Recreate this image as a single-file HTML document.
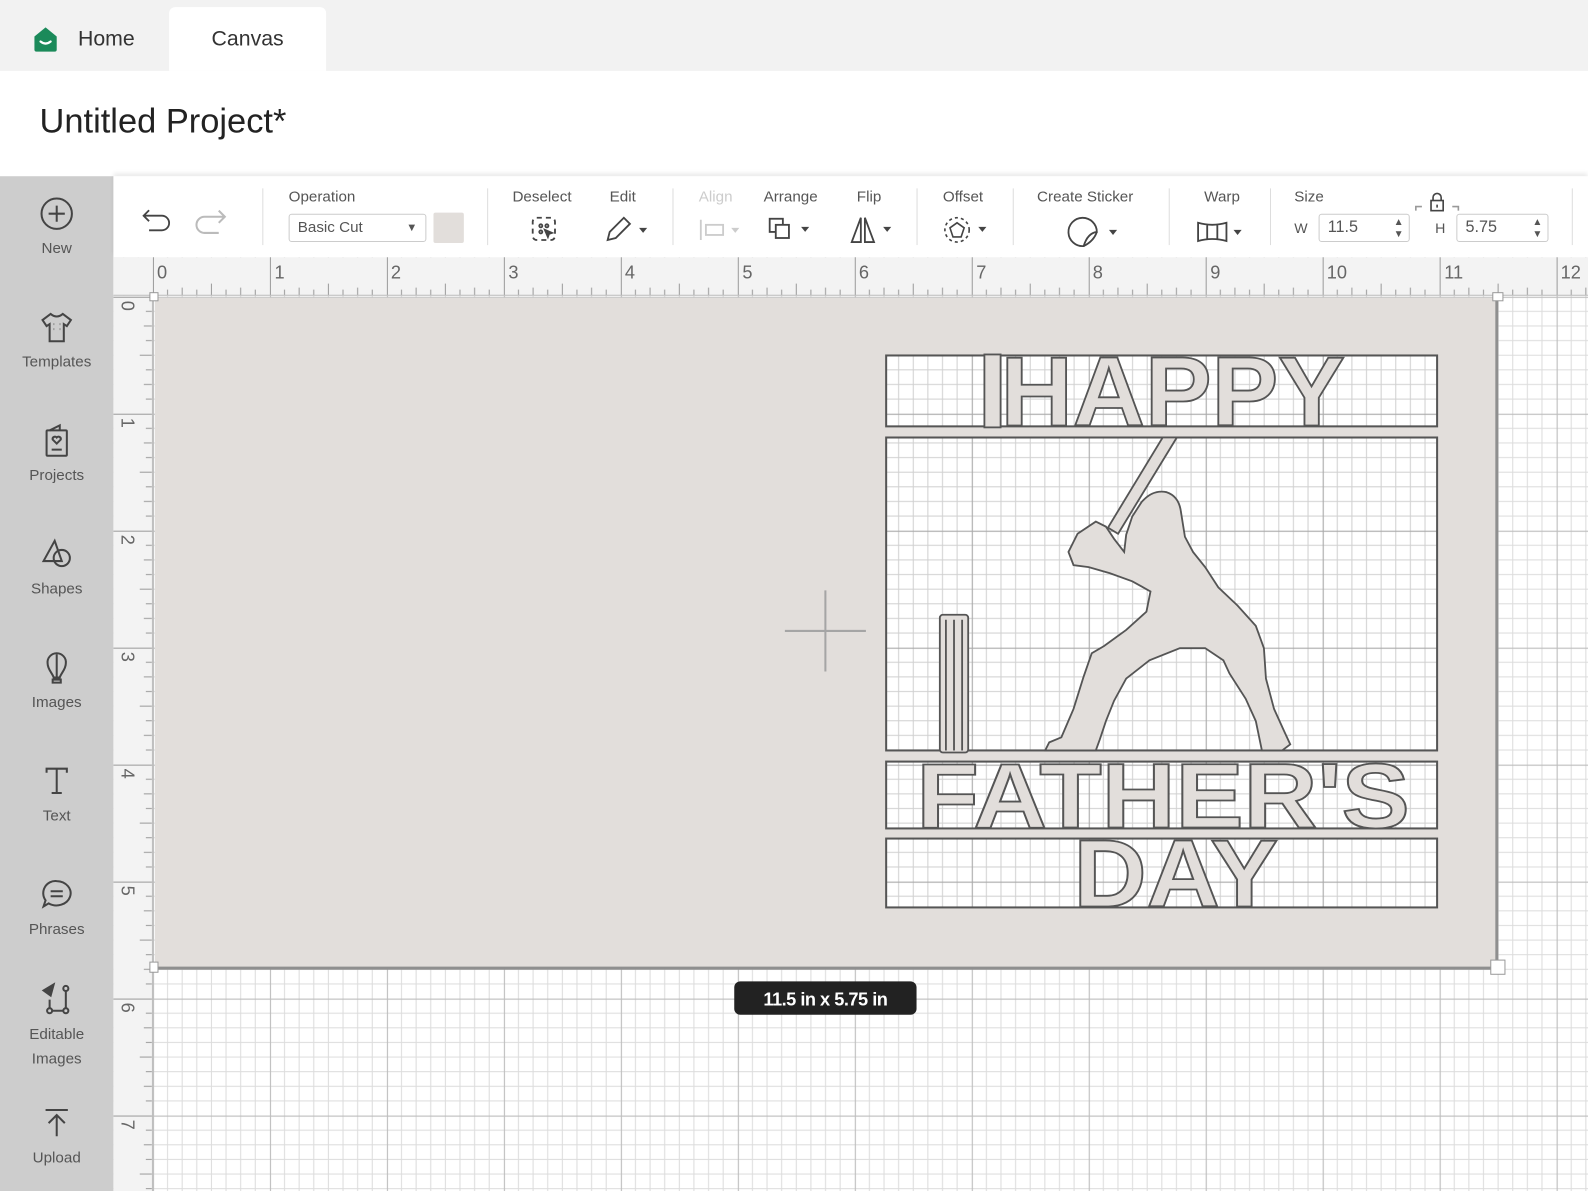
<!DOCTYPE html>
<html><head><meta charset="utf-8">
<style>
*{margin:0;padding:0;box-sizing:border-box}
html,body{width:1588px;height:1191px;overflow:hidden;background:#fff;font-family:"Liberation Sans",sans-serif}
#w{position:absolute;left:0;top:0;width:1568px;height:1176px;transform:scale(1.012755);transform-origin:0 0}
.abs{position:absolute}
.tabbar{left:0;top:0;width:1568px;height:70px;background:#f2f2f2}
.tab{top:7px;height:63px;display:flex;align-items:center;font-size:21px;color:#333}
.title{left:39px;top:101px;font-size:34px;color:#222}
.side{left:0;top:174px;width:112px;height:1002px;background:#cdcdcd}
.si{position:absolute;left:0;width:112px;text-align:center;font-size:15px;color:#555;line-height:24px}
.si svg{display:block;margin:0 auto 6px}
.tb{left:112px;top:174px;width:1456px;height:80px;background:#fff;box-shadow:0 -3px 4px rgba(0,0,0,.08)}
.lab{position:absolute;top:12px;font-size:15px;color:#555}
.div{position:absolute;top:12px;width:1px;height:56px;background:#ddd}
.inp{position:absolute;border:1px solid #ccc;border-radius:3px;font-size:16px;color:#555;padding-left:8px;line-height:26px;height:28px;background:#fff}
</style></head><body><div id="w">
<div class="abs tabbar"></div>
<div class="abs tab" style="left:0;width:167px;padding-left:32px">
<svg width="26" height="26" viewBox="0 0 26 26"><path d="M2 10 L13 1 L24 10 V23 a2 2 0 0 1 -2 2 H4 a2 2 0 0 1 -2 -2Z" fill="#1b8a5a"/><path d="M8 15 q5 4 10 0" stroke="#fff" stroke-width="2.2" fill="none" stroke-linecap="round"/></svg>
<span style="margin-left:19px">Home</span></div>
<div class="abs tab" style="left:167px;width:155px;background:#fff;border-radius:6px 6px 0 0;justify-content:center">Canvas</div>
<div class="abs title">Untitled Project*</div>

<div class="abs side">
<div class="si" style="top:20px"><svg width="34" height="34" viewBox="0 0 34 34" fill="none" stroke="#444" stroke-width="2"><circle cx="17" cy="17" r="15"/><path d="M17 9v16M9 17h16"/></svg>New</div>
<div class="si" style="top:132px"><svg width="34" height="34" viewBox="0 0 34 34" fill="none" stroke="#444" stroke-width="2"><path d="M11 4 L3 10 L7 16 L10 14 V31 H24 V14 L27 16 L31 10 L23 4 Q17 9 11 4Z"/><path d="M14 14h.5M20 14h.5M14 19h.5M20 19h.5"/></svg>Templates</div>
<div class="si" style="top:244px"><svg width="34" height="34" viewBox="0 0 34 34" fill="none" stroke="#444" stroke-width="2"><rect x="7" y="7" width="20" height="25" rx="1"/><path d="M10 7 L20 2 V7"/><path d="M17 20 l-4 -4 a2.3 2.3 0 0 1 4 -2 a2.3 2.3 0 0 1 4 2z"/><path d="M12 26h10"/></svg>Projects</div>
<div class="si" style="top:356px"><svg width="34" height="34" viewBox="0 0 34 34" fill="none" stroke="#444" stroke-width="2"><path d="M15 4 L4 24 H22Z"/><circle cx="22" cy="21" r="8"/></svg>Shapes</div>
<div class="si" style="top:468px"><svg width="34" height="34" viewBox="0 0 34 34" fill="none" stroke="#444" stroke-width="2"><path d="M17 3 a9 9 0 0 1 9 10 c0 6 -5 10 -6 14 h-6 c-1 -4 -6 -8 -6 -14 a9 9 0 0 1 9 -10z"/><path d="M17 4 v23 M13 29h8v3h-8z"/></svg>Images</div>
<div class="si" style="top:580px"><svg width="34" height="34" viewBox="0 0 34 34" fill="none" stroke="#444" stroke-width="2"><path d="M7 9 V5 H27 V9 M17 5 V29 M12 29 H22"/></svg>Text</div>
<div class="si" style="top:692px"><svg width="34" height="34" viewBox="0 0 34 34" fill="none" stroke="#444" stroke-width="2"><path d="M17 4 a14 12 0 1 1 -8 22 l-5 3 l2 -6 a12 12 0 0 1 11 -19z"/><path d="M11 14h12M11 19h12"/></svg>Phrases</div>
<div class="si" style="top:796px"><svg width="34" height="34" viewBox="0 0 34 34" fill="none" stroke="#444" stroke-width="2"><path d="M4 8 L14 2 L11 13 Z" fill="#444"/><path d="M10 17 V28 H26 V8"/><circle cx="10" cy="28" r="2.5" fill="#cdcdcd"/><circle cx="26" cy="28" r="2.5" fill="#cdcdcd"/><circle cx="26" cy="6" r="2.5" fill="#cdcdcd"/></svg>Editable<br>Images</div>
<div class="si" style="top:918px"><svg width="34" height="34" viewBox="0 0 34 34" fill="none" stroke="#444" stroke-width="2"><path d="M6 4H28M17 30V10M9 17l8-8 8 8"/></svg>Upload</div>
</div>

<div class="abs tb">
<svg class="abs" style="left:26px;top:30px" width="90" height="30" viewBox="0 0 90 30" fill="none" stroke-width="2"><path d="M8 4 L2 10 L8 16 M2 10 H22 a8 8 0 0 1 0 16 H8" stroke="#444" transform="translate(2,0) scale(.9)"/><path d="M82 4 L88 10 L82 16 M88 10 H68 a8 8 0 0 0 0 16 H82" stroke="#bbb" transform="translate(-4,0) scale(1)"/></svg>
<div class="div" style="left:147px"></div>
<div class="lab" style="left:173px">Operation</div>
<div class="inp" style="left:173px;top:37px;width:136px;font-size:15px">Basic Cut<span style="position:absolute;right:8px;font-size:11px">▼</span></div>
<div class="abs" style="left:316px;top:36px;width:30px;height:30px;background:#e2dedb;border-radius:2px"></div>
<div class="div" style="left:369px"></div>
<div class="lab" style="left:394px">Deselect</div>
<svg class="abs" style="left:411px;top:38px" width="28" height="28" viewBox="0 0 28 28" fill="none" stroke="#444" stroke-width="1.8"><rect x="3" y="3" width="22" height="22" rx="4" stroke-dasharray="5 4"/><circle cx="11" cy="11" r="1.5"/><circle cx="17" cy="11" r="1.5"/><circle cx="11" cy="17" r="1.5"/><path d="M15 15 l7 3 -3 1 -1 3z" fill="#444"/></svg>
<div class="lab" style="left:490px">Edit</div>
<svg class="abs" style="left:485px;top:38px" width="44" height="28" viewBox="0 0 44 28" fill="none" stroke="#444" stroke-width="1.8"><path d="M3 25 L5 17 L19 3 L25 9 L11 23 Z M3 25 L11 23"/><path d="M34 13h8l-4 5z" fill="#444" stroke="none"/></svg>
<div class="div" style="left:552px"></div>
<div class="lab" style="left:578px;color:#ccc">Align</div>
<svg class="abs" style="left:578px;top:42px" width="44" height="22" viewBox="0 0 44 22" fill="none" stroke="#ccc" stroke-width="1.8"><path d="M2 1v20"/><rect x="7" y="6" width="17" height="10"/><path d="M32 9h8l-4 5z" fill="#ccc" stroke="none"/></svg>
<div class="lab" style="left:642px">Arrange</div>
<svg class="abs" style="left:645px;top:39px" width="46" height="28" viewBox="0 0 46 28" fill="none" stroke="#444" stroke-width="1.8"><rect x="3" y="3" width="13" height="13"/><rect x="9" y="9" width="13" height="13" fill="#fff"/><path d="M34 11h8l-4 5z" fill="#444" stroke="none"/></svg>
<div class="lab" style="left:734px">Flip</div>
<svg class="abs" style="left:727px;top:38px" width="46" height="30" viewBox="0 0 46 30" fill="none" stroke="#444" stroke-width="1.8"><path d="M11 3 L2 27 H11Z M15 3 L24 27 H15Z"/><path d="M33 12h8l-4 5z" fill="#444" stroke="none"/></svg>
<div class="div" style="left:793px"></div>
<div class="lab" style="left:819px">Offset</div>
<svg class="abs" style="left:819px;top:38px" width="48" height="30" viewBox="0 0 48 30" fill="none" stroke="#444" stroke-width="1.6"><path d="M14 8 L21 13 L18 22 H10 L7 13Z"/><circle cx="14" cy="15" r="12" stroke-dasharray="3 3"/><path d="M35 12h8l-4 5z" fill="#444" stroke="none"/></svg>
<div class="div" style="left:888px"></div>
<div class="lab" style="left:912px">Create Sticker</div>
<svg class="abs" style="left:940px;top:38px" width="56" height="34" viewBox="0 0 56 34" fill="none" stroke="#444" stroke-width="1.8"><path d="M18 31 A14 14 0 1 1 31 17 Q22 18 18 31Z"/><path d="M31 17 Q28 26 18 31"/><path d="M43 15h8l-4 5z" fill="#444" stroke="none"/></svg>
<div class="div" style="left:1042px"></div>
<div class="lab" style="left:1077px">Warp</div>
<svg class="abs" style="left:1068px;top:42px" width="52" height="26" viewBox="0 0 52 26" fill="none" stroke="#444" stroke-width="1.8"><path d="M3 4 Q17 8 31 4 V22 Q17 18 3 22Z M12 6v14M22 6v14"/><path d="M38 11h8l-4 5z" fill="#444" stroke="none"/></svg>
<div class="div" style="left:1142px"></div>
<div class="lab" style="left:1166px">Size</div>
<svg class="abs" style="left:1284px;top:14px" width="46" height="24" viewBox="0 0 46 24" fill="none" stroke="#444" stroke-width="1.6"><path d="M2 20 v-4 h6 M44 20 v-4 h-6" stroke="#999"/><rect x="17" y="10" width="12" height="10"/><path d="M19 10 v-3 a4 4 0 0 1 8 0 v3"/><path d="M23 14v3"/></svg>
<div class="lab" style="left:1166px;top:43px;font-size:14px">W</div>
<div class="inp" style="left:1190px;top:37px;width:90px">11.5<span style="position:absolute;right:5px;top:0;font-size:10px;line-height:12px;top:2px">▲<br>▼</span></div>
<div class="lab" style="left:1305px;top:43px;font-size:14px">H</div>
<div class="inp" style="left:1326px;top:37px;width:91px">5.75<span style="position:absolute;right:5px;font-size:10px;line-height:12px;top:2px">▲<br>▼</span></div>
<div class="div" style="left:1440px"></div>
</div>

<svg class="abs" style="left:0;top:0" width="1568" height="1176" viewBox="0 0 1568 1176">
<defs>
<pattern id="g" patternUnits="userSpaceOnUse" x="151" y="293" width="115.5" height="115.5">
<rect width="115.5" height="115.5" fill="#fff"/>
<g stroke="#dcdcdc" stroke-width="1">
<path d="M14.44 0V115.5M28.88 0V115.5M43.31 0V115.5M57.75 0V115.5M72.19 0V115.5M86.63 0V115.5M101.06 0V115.5"/>
<path d="M0 14.44H115.5M0 28.88H115.5M0 43.31H115.5M0 57.75H115.5M0 72.19H115.5M0 86.63H115.5M0 101.06H115.5"/>
</g>
<path d="M0.5 0V115.5M0 0.5H115.5" stroke="#bdbdbd" stroke-width="1.2"/>
</pattern>
<pattern id="gm" patternUnits="userSpaceOnUse" x="151" y="293" width="115.5" height="115.5">
<rect width="115.5" height="115.5" fill="#fff"/>
<g stroke="#d0d0d0" stroke-width="1">
<path d="M14.44 0V115.5M28.88 0V115.5M43.31 0V115.5M57.75 0V115.5M72.19 0V115.5M86.63 0V115.5M101.06 0V115.5"/>
<path d="M0 14.44H115.5M0 28.88H115.5M0 43.31H115.5M0 57.75H115.5M0 72.19H115.5M0 86.63H115.5M0 101.06H115.5"/>
</g>
<path d="M0.5 0V115.5M0 0.5H115.5" stroke="#aaa" stroke-width="1.2"/>
</pattern>
<pattern id="tt" patternUnits="userSpaceOnUse" x="151" y="254" width="115.5" height="38">
<g stroke="#999" stroke-width="1">
<path d="M0.5 0V38"/>
<path d="M14.44 32V38M28.88 30V38M43.31 32V38M57.75 26V38M72.19 32V38M86.63 30V38M101.06 32V38"/>
</g></pattern>
<pattern id="tl" patternUnits="userSpaceOnUse" x="112" y="293" width="38" height="115.5">
<g stroke="#999" stroke-width="1">
<path d="M0 0.5H38"/>
<path d="M32 14.44H38M30 28.88H38M32 43.31H38M26 57.75H38M32 72.19H38M30 86.63H38M32 101.06H38"/>
</g></pattern>
</defs>
<rect x="150" y="292" width="1418" height="884" fill="url(#g)"/>
<rect x="112" y="254" width="1456" height="38" fill="#f3f3f3"/>
<rect x="112" y="254" width="1456" height="38" fill="url(#tt)"/>
<rect x="112" y="292" width="38" height="884" fill="#f3f3f3"/>
<rect x="112" y="292" width="38" height="884" fill="url(#tl)"/>
<rect x="112" y="254" width="38" height="38" fill="#f3f3f3"/>
<path d="M112 291.5H1568M150.5 292V1176" stroke="#bbb"/>
<g font-size="18" fill="#666" font-family="Liberation Sans, sans-serif">
<text x="155" y="275">0</text><text x="271" y="275">1</text><text x="386" y="275">2</text><text x="502" y="275">3</text><text x="617" y="275">4</text><text x="733" y="275">5</text><text x="848" y="275">6</text><text x="964" y="275">7</text><text x="1079" y="275">8</text><text x="1195" y="275">9</text><text x="1310" y="275">10</text><text x="1426" y="275">11</text><text x="1541" y="275">12</text>
<g transform="translate(120,297) rotate(90)"><text x="0" y="0">0</text><text x="115.5" y="0">1</text><text x="231" y="0">2</text><text x="346.5" y="0">3</text><text x="462" y="0">4</text><text x="577.5" y="0">5</text><text x="693" y="0">6</text><text x="808.5" y="0">7</text></g>
</g>
<rect x="153" y="294" width="1326" height="661" fill="#e2dedb"/>
<path d="M1478 296V956H153" stroke="#8f8f8f" stroke-width="3" fill="none"/>
<rect x="148" y="289" width="8" height="8" fill="#fff" stroke="#999"/>
<rect x="1474" y="289" width="10" height="8" fill="#fff" stroke="#999"/>
<rect x="148" y="950" width="8" height="10" fill="#fff" stroke="#999"/>
<rect x="1472" y="948" width="14" height="14" fill="#fff" stroke="#999"/>
<g stroke="#555" stroke-width="2">
<rect x="875" y="351" width="544" height="70" fill="url(#gm)"/>
<rect x="875" y="432" width="544" height="309" fill="url(#gm)"/>
<rect x="875" y="752" width="544" height="66" fill="url(#gm)"/>
<rect x="875" y="828" width="544" height="68" fill="url(#gm)"/>
</g>
<g fill="#e2dedb" stroke="#555" stroke-width="1.8" font-family="Liberation Sans, sans-serif" font-weight="bold">
<rect x="972" y="350" width="16" height="72"/>
<text x="988" y="420" font-size="97" textLength="340" lengthAdjust="spacingAndGlyphs">HAPPY</text>
<text x="905" y="817" font-size="91" textLength="487" lengthAdjust="spacingAndGlyphs">FATHER'S</text>
<text x="1060" y="895" font-size="94" textLength="202" lengthAdjust="spacingAndGlyphs">DAY</text>
<path d="M1148 432 L1162 432 L1104 527 L1094 521 Z"/>
<path d="M1127 496 Q1138 483 1152 486 Q1164 490 1166 505 L1170 530 L1178 545 L1190 560 L1203 580 L1222 598 L1240 618 L1248 640 L1250 670 L1258 700 L1268 722 L1274 735 L1266 741 L1246 741 L1240 712 L1230 690 L1214 665 L1208 652 L1190 640 L1165 640 L1135 652 L1112 670 L1100 692 L1092 712 L1086 730 L1082 741 L1032 741 L1036 733 L1048 728 L1060 700 L1070 668 L1078 645 L1090 638 L1112 622 L1132 604 L1136 584 L1118 574 L1096 566 L1075 560 L1060 558 L1055 545 L1064 527 L1082 515 L1092 520 L1100 532 L1110 545 L1112 528 L1118 510 Z"/>
<rect x="928" y="607" width="28" height="136" rx="3"/>
<path d="M934 612V741M942 612V741M950 612V741"/>
</g>
<path d="M775 623H855M815 583V663" stroke="#a5a5a5" stroke-width="2"/>
<rect x="725" y="969" width="180" height="33" rx="6" fill="#222"/>
<text x="815" y="993" font-size="18" font-weight="bold" fill="#fff" text-anchor="middle" font-family="Liberation Sans, sans-serif" letter-spacing="-0.5">11.5  in x 5.75  in</text>
</svg>
</div></body></html>
